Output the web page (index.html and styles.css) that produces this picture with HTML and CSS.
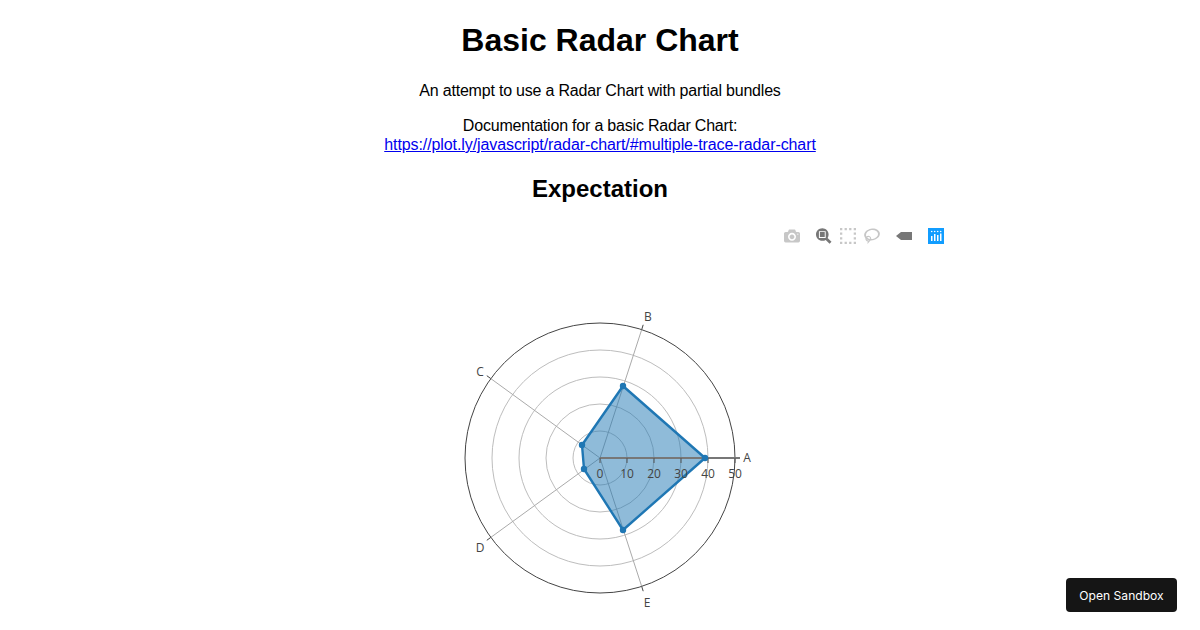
FILE: index.html
```html
<!DOCTYPE html>
<html lang="en">
<head>
<meta charset="utf-8">
<title>Basic Radar Chart</title>
<link rel="stylesheet" href="styles.css">
</head>
<body>
<main class="page">
  <h1>Basic Radar Chart</h1>
  <p class="intro">An attempt to use a Radar Chart with partial bundles</p>
  <p class="docs">Documentation for a basic Radar Chart:<br><a class="docs-link" href="#">https://plot.ly/javascript/radar-chart/#multiple-trace-radar-chart</a></p>
  <h2>Expectation</h2>
  <div class="chart">
    <div class="modebar">
      <div class="modebar-group">
        <svg class="icon" viewBox="0 0 1000 1000"><path class="light" transform="matrix(1 0 0 -1 0 850)" d="M500 450c-83 0-150-67-150-150 0-83 67-150 150-150 83 0 150 67 150 150 0 83-67 150-150 150z m400 150h-120c-16 0-34 13-39 29l-31 93c-6 15-23 28-40 28h-340c-16 0-34-13-39-28l-31-94c-6-15-23-28-40-28h-120c-55 0-100-45-100-100v-450c0-55 45-100 100-100h800c55 0 100 45 100 100v450c0 55-45 100-100 100z m-400-550c-138 0-250 112-250 250 0 138 112 250 250 250 138 0 250-112 250-250 0-138-112-250-250-250z m365 380c-19 0-35 16-35 35 0 19 16 35 35 35 19 0 35-16 35-35 0-19-16-35-35-35z"/></svg>
      </div>
      <div class="modebar-group">
        <svg class="icon" viewBox="0 0 1031 1000"><path class="dark" transform="matrix(1 0 0 -1 0 850)" d="M1000-25l-250 251c40 63 63 138 63 218 0 224-182 406-407 406-224 0-406-182-406-406s183-406 407-406c80 0 155 22 218 62l250-250 125 125z m-812 250l0 438 437 0 0-438-437 0z m62 375l313 0 0-312-313 0 0 312z"/></svg>
        <svg class="icon" viewBox="0 0 1000 1000"><path class="light" transform="matrix(1 0 0 -1 0 850)" d="M0 850l0-143 143 0 0 143-143 0z m286 0l0-143 143 0 0 143-143 0z m285 0l0-143 143 0 0 143-143 0z m286 0l0-143 143 0 0 143-143 0z m-857-286l0-143 143 0 0 143-143 0z m857 0l0-143 143 0 0 143-143 0z m-857-285l0-143 143 0 0 143-143 0z m857 0l0-143 143 0 0 143-143 0z m-857-286l0-143 143 0 0 143-143 0z m286 0l0-143 143 0 0 143-143 0z m285 0l0-143 143 0 0 143-143 0z m286 0l0-143 143 0 0 143-143 0z"/></svg>
        <svg class="icon" viewBox="0 0 1031 1000"><path class="light" transform="matrix(1 0 0 -1 0 850)" d="M1018 538c-36 207-290 336-568 286-277-48-473-256-436-463 10-57 36-108 76-151-13-66 11-137 68-183 34-28 75-41 114-42l-55-70 0 0c-2-1-3-2-4-3-10-14-8-34 5-45 14-11 34-8 45 4 1 1 2 3 2 5l0 0 113 140c16 11 31 24 45 40 4 3 6 7 8 11 48-3 100 0 151 9 278 48 473 255 436 462z m-624-379c-80 14-149 48-197 96 42 42 109 47 156 9 33-26 47-66 41-105z m-187-74c-19 16-33 37-39 60 50-32 109-55 174-68-42-25-95-24-135 8z m360 75c-34-7-69-9-102-8 8 62-16 128-68 170-73 59-175 54-244-5-9 20-16 40-20 61-28 159 121 317 333 354s407-60 434-217c28-159-121-318-333-355z"/></svg>
      </div>
      <div class="modebar-group">
        <svg class="icon" viewBox="0 0 16 16"><path class="dark" d="M0 8 5 4H16V12H5Z"/></svg>
      </div>
      <div class="modebar-group">
        <svg class="icon" viewBox="0 0 16 16"><rect class="brand" width="16" height="16"/><g class="brand-mark"><rect x="3" y="8" width="1.500" height="5"/><rect x="6" y="6" width="1.500" height="7"/><rect x="9" y="7" width="1.500" height="6"/><rect x="12" y="5.500" width="1.500" height="7.500"/><circle cx="3.700" cy="3.500" r=".8"/><circle cx="6.700" cy="3.500" r=".8"/><circle cx="9.700" cy="3.500" r=".8"/><circle cx="12.700" cy="3.500" r=".8"/></g></svg>
      </div>
    </div>
    <svg class="plot" viewBox="0 0 700 405">
      <g transform="translate(350 240)">
        <circle class="grid" r="27"/>
        <circle class="grid" r="54"/>
        <circle class="grid" r="81"/>
        <circle class="grid" r="108"/>
        <circle class="frame" r="135"/>
        <line class="spoke" x2="135"/>
        <line class="spoke" x2="41.700" y2="-128.400"/>
        <line class="spoke" x2="-109.200" y2="-79.400"/>
        <line class="spoke" x2="-109.200" y2="79.400"/>
        <line class="spoke" x2="41.700" y2="128.400"/>
        <line class="tick" x1="41.700" y1="-128.400" x2="43.200" y2="-133.200"/>
        <line class="tick" x1="-109.200" y1="-79.400" x2="-113.200" y2="-82.300"/>
        <line class="tick" x1="-109.200" y1="79.400" x2="-113.200" y2="82.300"/>
        <line class="tick" x1="41.700" y1="128.400" x2="43.200" y2="133.200"/>
        <polygon class="area" points="105,0 23,-72 -18,-13 -16,11 23,72"/>
        <line class="axis" x2="140"/>
        <path class="axis-ticks" d="M0 0v5M27 0v5M54 0v5M81 0v5M108 0v5M135 0v5"/>
        <circle class="marker" cx="105" r="3.200"/>
        <circle class="marker" cx="23" cy="-72" r="3.200"/>
        <circle class="marker" cx="-18" cy="-13" r="3.200"/>
        <circle class="marker" cx="-16" cy="11" r="3.200"/>
        <circle class="marker" cx="23" cy="72" r="3.200"/>
        <text class="label" y="20">0</text>
        <text class="label" x="27" y="20">10</text>
        <text class="label" x="54" y="20">20</text>
        <text class="label" x="81" y="20">30</text>
        <text class="label" x="108" y="20">40</text>
        <text class="label" x="135" y="20">50</text>
        <text class="label" x="147" y="4">A</text>
        <text class="label" x="48" y="-137">B</text>
        <text class="label" x="-120" y="-82">C</text>
        <text class="label" x="-120" y="94">D</text>
        <text class="label" x="47" y="149">E</text>
      </g>
    </svg>
  </div>
</main>
<a class="sandbox" href="#">Open Sandbox</a>
</body>
</html>
```
FILE: styles.css
```css
body {
  margin: 0;
  font-family: "Liberation Sans", Arial, sans-serif;
  color: #000;
  background: #fff;
}

.page {
  text-align: center;
  padding-top: 1px;
}

.intro,
.docs {
  line-height: 19px;
  letter-spacing: -0.2px;
}

.docs-link {
  letter-spacing: -0.09px;
}

h2 {
  margin-top: 21px;
  margin-bottom: 15px;
}

.chart {
  position: relative;
  width: 700px;
  height: 405px;
  margin: 0 auto;
}

.plot {
  display: block;
  width: 700px;
  height: 405px;
}

.modebar {
  position: absolute;
  top: 10px;
  right: 6px;
  display: flex;
  gap: 16px;
}

.modebar-group {
  display: flex;
  gap: 8px;
}

.icon {
  display: block;
  width: 16px;
  height: 16px;
}

.light { fill: #c7c7c7; }
.dark { fill: #777; }
.brand { fill: #119dff; }
.brand-mark { fill: #fff; }

.grid,
.frame {
  fill: none;
}

.grid { stroke: #bdbdbd; stroke-width: 1; }
.frame { stroke: #444; stroke-width: 1; }
.spoke { stroke: #aaa; stroke-width: 1; }
.tick { stroke: #444; stroke-width: 1; }
.axis { stroke: #777; stroke-width: 2; }
.axis-ticks { stroke: #555; stroke-width: 1; fill: none; }
.area { fill: rgba(31, 119, 180, .5); stroke: #1f77b4; stroke-width: 2.400; stroke-linejoin: round; }
.marker { fill: #1f77b4; }

.label {
  font-family: "Open Sans", sans-serif;
  font-size: 12px;
  fill: #444;
  text-anchor: middle;
}

.sandbox {
  position: fixed;
  right: 23px;
  bottom: 18px;
  width: 111px;
  height: 34px;
  box-sizing: border-box;
  display: flex;
  align-items: center;
  justify-content: center;
  border-radius: 4px;
  background: #151515;
  color: #fff;
  font-family: Inter, sans-serif;
  font-size: 12.1px;
  text-decoration: none;
}
```
